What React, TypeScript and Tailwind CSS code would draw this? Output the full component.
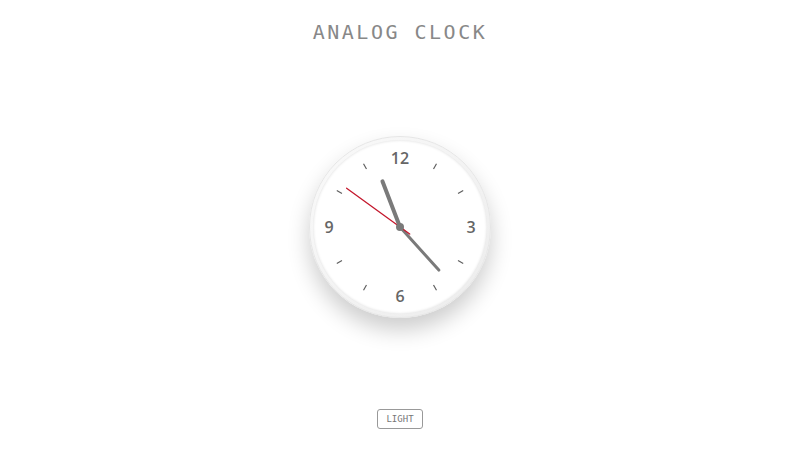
import { useState } from "react";

const mono = { fontFamily: '"DejaVu Sans Mono", "Liberation Mono", monospace' };

const R = 91;

function polar(angle: number, r: number) {
  const rad = ((angle - 90) * Math.PI) / 180;
  return { x: R + r * Math.cos(rad), y: R + r * Math.sin(rad) };
}

function Hand({ angle, length, tail = 0, width, color }: { angle: number; length: number; tail?: number; width: number; color: string }) {
  const a = polar(angle, length);
  const b = polar(angle + 180, tail);
  return <line x1={b.x} y1={b.y} x2={a.x} y2={a.y} stroke={color} strokeWidth={width} strokeLinecap="round" />;
}

function Clock() {
  const ticks = [1, 2, 4, 5, 7, 8, 10, 11];
  const numerals = [
    { n: "12", a: 0, r: 69 },
    { n: "3", a: 90, r: 71 },
    { n: "6", a: 180, r: 69 },
    { n: "9", a: 270, r: 71 },
  ];

  return (
    <div className="relative h-[182px] w-[182px] rounded-full border border-[#e6e6e6] bg-gradient-to-br from-[#fafafa] to-[#ececec] shadow-[0_12px_22px_rgba(0,0,0,0.2)]">
      <div className="absolute inset-[3px] rounded-full bg-white shadow-[inset_0_0_3px_rgba(0,0,0,0.15)]" />
      <svg className="absolute -inset-px" width="182" height="182" viewBox="0 0 182 182">
        {ticks.map((h) => {
          const p1 = polar(h * 30, 67);
          const p2 = polar(h * 30, 73);
          return <line key={h} x1={p1.x} y1={p1.y} x2={p2.x} y2={p2.y} stroke="#5f5f5f" strokeWidth="1.2" />;
        })}
        {numerals.map(({ n, a, r }) => {
          const p = polar(a, r);
          return (
            <text
              key={n}
              x={p.x}
              y={p.y}
              textAnchor="middle"
              dominantBaseline="central"
              fill="#666"
              fontSize="16"
              fontWeight="600"
              fontFamily='"Open Sans", "Noto Sans", sans-serif'
            >
              {n}
            </text>
          );
        })}
        <Hand angle={339} length={49} width={4} color="#7a7a7a" />
        <Hand angle={138} length={58} width={3} color="#7a7a7a" />
        <Hand angle={306} length={66} tail={12} width={1.3} color="#c4172c" />
        <circle cx={R} cy={R} r="4" fill="#7a7a7a" />
      </svg>
    </div>
  );
}

export default function App() {
  const [dark, setDark] = useState(false);

  return (
    <div className="flex h-[450px] w-full flex-col items-center bg-white">
      <h1 className="mt-[18px] text-[20px] leading-[28px] tracking-[2.5px] text-[#888]" style={mono}>
        ANALOG CLOCK
      </h1>
      <div className="mt-[90px]">
        <Clock />
      </div>
      <button
        onClick={() => setDark(!dark)}
        className="mt-[91px] h-[20px] w-[46px] rounded-[3px] border border-[#999] text-[9px] leading-none text-[#777]"
        style={mono}
      >
        {dark ? "DARK" : "LIGHT"}
      </button>
    </div>
  );
}
